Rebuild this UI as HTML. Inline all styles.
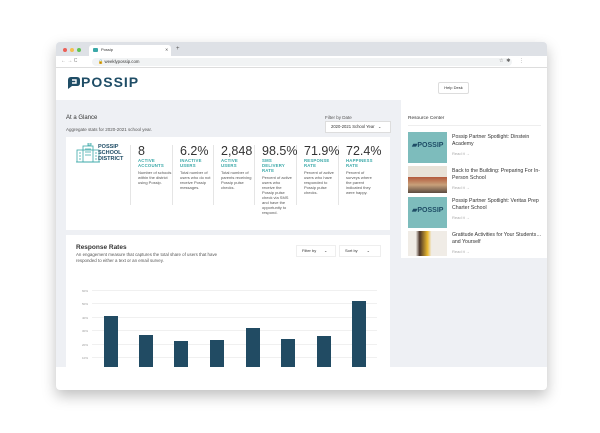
<!DOCTYPE html>
<html><head><style>
*{margin:0;padding:0;box-sizing:border-box}
body{width:600px;height:433px;background:#fff;position:relative;overflow:hidden;font-family:"Liberation Sans",sans-serif;color:#333}
.a{position:absolute}
.win{left:56px;top:42px;width:491px;height:348px;background:#fff;border-radius:4px;box-shadow:0 6px 14px rgba(0,0,0,.25);overflow:hidden}
.t{font-size:4px;color:#555;line-height:5px}
.lbl{font-size:4.3px;color:#3aa8a8;font-weight:bold;line-height:5px;letter-spacing:.2px}
.num{font-size:12.5px;color:#333;}
.sep{width:1px;background:#e5e5e5;top:8px;height:60px}
.grid{left:26px;width:285px;height:1px;background:#f0f0f0}
.yl{font-size:3px;color:#999;left:16px}
.bar{background:#214b63;width:14px;bottom:0}
.rt{font-size:5.2px;color:#333;line-height:7px;left:51px;width:92px}
.rd{font-size:4px;color:#aaa;left:51px}
.th{left:7px;width:39px;background:#7dbcbc}
</style></head><body>
<div class="a win">
 <div class="a" style="left:0;top:0;width:491px;height:14px;background:#dee1e6"></div>
 <div class="a" style="left:7px;top:6px;width:4px;height:4px;border-radius:50%;background:#ec5f57"></div>
 <div class="a" style="left:14px;top:6px;width:4px;height:4px;border-radius:50%;background:#f4bf4f"></div>
 <div class="a" style="left:21px;top:6px;width:4px;height:4px;border-radius:50%;background:#60c454"></div>
 <div class="a" style="left:33px;top:3px;width:82px;height:11px;background:#fff;border-radius:3px 3px 0 0"></div>
 <div class="a" style="left:37px;top:6px;width:5px;height:4px;background:#3aa8a8;border-radius:1px"></div>
 <div class="a" style="left:45px;top:5px;font-size:4px">Possip</div>
 <div class="a" style="left:109px;top:5px;font-size:4px;color:#555">✕</div>
 <div class="a" style="left:120px;top:4px;font-size:6px;color:#555">+</div>
 <div class="a" style="left:0;top:14px;width:491px;height:12px;background:#fff;border-bottom:1px solid #ddd"></div>
 <div class="a" style="left:5px;top:16px;font-size:5px;color:#888">← → C</div>
 <div class="a" style="left:36px;top:16px;width:420px;height:8px;background:#f1f3f4;border-radius:4px"></div>
 <div class="a" style="left:42px;top:17px;font-size:4.3px;color:#333">🔒 weeklypossip.com</div>
 <div class="a" style="left:443px;top:16px;font-size:5px;color:#666">☆ &nbsp;✱ &nbsp; &nbsp; &nbsp;⋮</div>
 <!-- header -->
 <svg class="a" style="left:12px;top:35px" width="12" height="12" viewBox="0 0 12 12"><path d="M0 3Q0 0 3 0H9Q12 0 12 3V6Q12 9 9 9H4L0 12Z" fill="#1f4d66"/><path d="M4 3H8V6H4" fill="none" stroke="#fff" stroke-width="1.4"/></svg>
 <div class="a" style="left:25px;top:32px;font-size:14px;font-weight:bold;color:#1f4d66;letter-spacing:1px">POSSIP</div>
 <div class="a" style="left:382px;top:40px;width:31px;height:12px;border:1px solid #ddd;border-radius:2px;font-size:4px;text-align:center;line-height:10px">Help Desk</div>
 <div class="a" style="left:0;top:58px;width:491px;height:267px;background:#eef0f4"></div>
 <!-- glance -->
 <div class="a" style="left:10px;top:73px;font-size:6px;color:#333">At a Glance</div>
 <div class="a" style="left:10px;top:85px;font-size:4.5px;color:#555">Aggregate stats for 2020-2021 school year.</div>
 <div class="a" style="left:269px;top:73px;font-size:4.5px;color:#555">Filter by Date</div>
 <div class="a" style="left:269px;top:79px;width:66px;height:12px;background:#fff;border:1px solid #ddd;font-size:4.2px;line-height:10px;padding-left:5px">2020-2021 School Year &nbsp; ⌄</div>
 <div class="a" style="left:10px;top:95px;width:324px;height:93px;background:#fff">
  <svg class="a" style="left:10px;top:6px" width="24" height="20" viewBox="0 0 24 20" fill="none" stroke="#3aa8a8" stroke-width=".8"><rect x="1" y="7" width="22" height="12"/><rect x="7" y="3" width="10" height="16"/><path d="M12 3V0h3v2h-3M3 10h2M3 13h2M3 16h2M19 10h2M19 13h2M19 16h2M9 6h6M9 9h6M9 12h6M0 19h24"/></svg>
  <div class="a" style="left:32px;top:7px;font-size:5.5px;font-weight:bold;color:#1f4d66;line-height:6px">POSSIP<br>SCHOOL<br>DISTRICT</div>
  <div class="a sep" style="left:64px"></div><div class="a sep" style="left:106px"></div><div class="a sep" style="left:147px"></div><div class="a sep" style="left:188px"></div><div class="a sep" style="left:230px"></div><div class="a sep" style="left:272px"></div>
  <div class="a" style="left:72px;top:7px;width:34px"><div class="num">8</div><div class="lbl">ACTIVE<br>ACCOUNTS</div><div class="t" style="margin-top:2px">Number of schools within the district using Possip.</div></div>
  <div class="a" style="left:114px;top:7px;width:32px"><div class="num">6.2%</div><div class="lbl">INACTIVE<br>USERS</div><div class="t" style="margin-top:2px">Total number of users who do not receive Possip messages.</div></div>
  <div class="a" style="left:155px;top:7px;width:32px"><div class="num">2,848</div><div class="lbl">ACTIVE<br>USERS</div><div class="t" style="margin-top:2px">Total number of parents receiving Possip pulse checks.</div></div>
  <div class="a" style="left:196px;top:7px;width:32px"><div class="num">98.5%</div><div class="lbl">SMS<br>DELIVERY<br>RATE</div><div class="t" style="margin-top:2px">Percent of active users who receive the Possip pulse check via SMS and have the opportunity to respond.</div></div>
  <div class="a" style="left:238px;top:7px;width:32px"><div class="num">71.9%</div><div class="lbl">RESPONSE<br>RATE</div><div class="t" style="margin-top:2px">Percent of active users who have responded to Possip pulse checks.</div></div>
  <div class="a" style="left:280px;top:7px;width:32px"><div class="num">72.4%</div><div class="lbl">HAPPINESS<br>RATE</div><div class="t" style="margin-top:2px">Percent of surveys where the parent indicated they were happy.</div></div>
 </div>
 <!-- response -->
 <div class="a" style="left:10px;top:193px;width:324px;height:132px;background:#fff">
  <div class="a" style="left:10px;top:9px;font-size:6.5px;font-weight:bold;color:#333">Response Rates</div>
  <div class="a" style="left:10px;top:17px;font-size:4.4px;color:#555;line-height:5.5px;width:150px">An engagement measure that captures the total share of users that have responded to either a text or an email survey.</div>
  <div class="a" style="left:230px;top:10px;width:40px;height:12px;border:1px solid #eee;font-size:4px;line-height:10px;padding-left:5px">Filter by &nbsp; &nbsp; &nbsp; ⌄</div>
  <div class="a" style="left:273px;top:10px;width:42px;height:12px;border:1px solid #eee;font-size:4px;line-height:10px;padding-left:5px">Sort by &nbsp; &nbsp; &nbsp; &nbsp;⌄</div>
  <div class="a grid" style="top:55px"></div><div class="a grid" style="top:68px"></div><div class="a grid" style="top:82px"></div><div class="a grid" style="top:95px"></div><div class="a grid" style="top:109px"></div><div class="a grid" style="top:122px"></div>
  <div class="a yl" style="top:54px">60%</div><div class="a yl" style="top:67px">50%</div><div class="a yl" style="top:81px">40%</div><div class="a yl" style="top:94px">30%</div><div class="a yl" style="top:108px">20%</div><div class="a yl" style="top:121px">10%</div>
  <div class="a" style="left:0;top:0;width:324px;height:132px">
   <div class="a bar" style="left:38px;top:81px"></div>
   <div class="a bar" style="left:73px;top:100px"></div>
   <div class="a bar" style="left:108px;top:106px"></div>
   <div class="a bar" style="left:144px;top:105px"></div>
   <div class="a bar" style="left:180px;top:93px"></div>
   <div class="a bar" style="left:215px;top:104px"></div>
   <div class="a bar" style="left:251px;top:101px"></div>
   <div class="a bar" style="left:286px;top:66px"></div>
  </div>
 </div>
 <!-- resources -->
 <div class="a" style="left:345px;top:58px;width:146px;height:158px;background:#fff">
  <div class="a" style="left:7px;top:16px;font-size:4.8px;color:#333">Resource Center</div>
  <div class="a" style="left:7px;top:25px;width:133px;height:1px;background:#eee"></div>
  <div class="a th" style="top:32px;height:31px"><div class="a" style="left:4px;top:9px;font-size:7px;font-weight:bold;color:#1f4d66">▰POSSIP</div></div>
  <div class="a rt" style="top:34px">Possip Partner Spotlight: Dinstein Academy</div><div class="a rd" style="top:51px">Read it →</div>
  <div class="a" style="left:7px;top:66px;width:39px;height:27px;background:linear-gradient(#e8e2d8 40%,#b3583a 40%,#c8a07a 70%,#5a4a40)"></div>
  <div class="a rt" style="top:68px">Back to the Building: Preparing For In-Person School</div><div class="a rd" style="top:85px">Read it →</div>
  <div class="a th" style="top:97px;height:31px"><div class="a" style="left:4px;top:9px;font-size:7px;font-weight:bold;color:#1f4d66">▰POSSIP</div></div>
  <div class="a rt" style="top:98px">Possip Partner Spotlight: Veritas Prep Charter School</div><div class="a rd" style="top:115px">Read it →</div>
  <div class="a" style="left:7px;top:131px;width:39px;height:25px;background:linear-gradient(90deg,#f0ece6 20%,#4a3428 30%,#e8b830 50%,#f0ece6 60%)"></div>
  <div class="a rt" style="top:132px">Gratitude Activities for Your Students… and Yourself</div><div class="a rd" style="top:149px">Read it →</div>
 </div>
</div>
</body></html>
